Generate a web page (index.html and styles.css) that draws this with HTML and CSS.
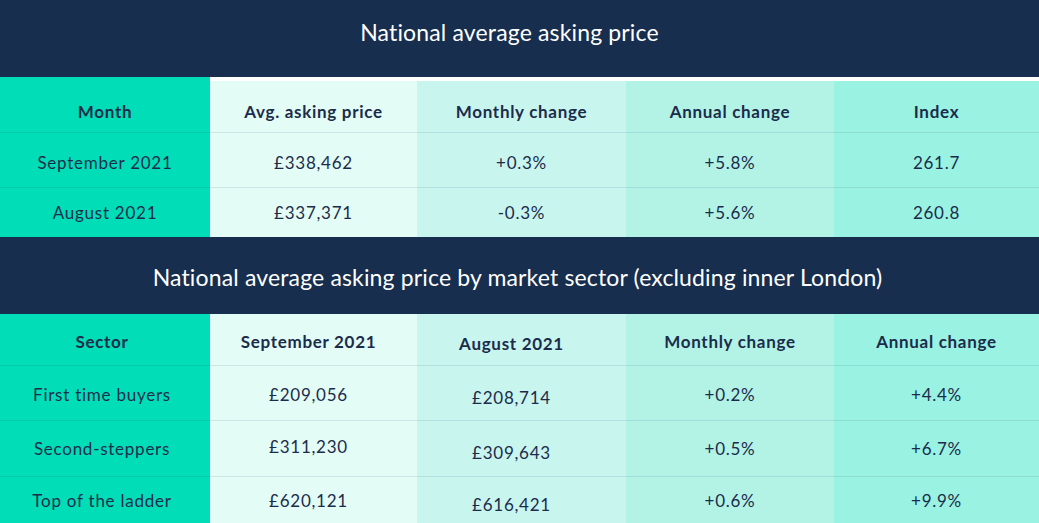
FILE: index.html
```html
<!DOCTYPE html>
<html lang="en">
<head>
<meta charset="utf-8">
<title>National average asking price</title>
<link rel="stylesheet" href="styles.css">
</head>
<body>
<section class="block">
  <h2 class="title title-main">National average asking price</h2>
  <div class="grid t1">
    <div class="cell c1 head">Month</div>
    <div class="cell c2 head">Avg. asking price</div>
    <div class="cell c3 head">Monthly change</div>
    <div class="cell c4 head">Annual change</div>
    <div class="cell c5 head">Index</div>

    <div class="cell c1 r1">September 2021</div>
    <div class="cell c2 r1">£338,462</div>
    <div class="cell c3 r1">+0.3%</div>
    <div class="cell c4 r1">+5.8%</div>
    <div class="cell c5 r1">261.7</div>

    <div class="cell c1 r2 last">August 2021</div>
    <div class="cell c2 r2 last">£337,371</div>
    <div class="cell c3 r2 last">-0.3%</div>
    <div class="cell c4 r2 last">+5.6%</div>
    <div class="cell c5 r2 last">260.8</div>
  </div>
</section>
<section class="block">
  <h2 class="title title-sector">National average asking price by market sector (excluding inner London)</h2>
  <div class="grid t2">
    <div class="cell c1 head">Sector</div>
    <div class="cell c2 head">September 2021</div>
    <div class="cell c3 head low">August 2021</div>
    <div class="cell c4 head">Monthly change</div>
    <div class="cell c5 head">Annual change</div>

    <div class="cell c1 s1">First time buyers</div>
    <div class="cell c2 s1">£209,056</div>
    <div class="cell c3 s1 low">£208,714</div>
    <div class="cell c4 s1">+0.2%</div>
    <div class="cell c5 s1">+4.4%</div>

    <div class="cell c1 s2">Second-steppers</div>
    <div class="cell c2 s2 up">£311,230</div>
    <div class="cell c3 s2 low">£309,643</div>
    <div class="cell c4 s2">+0.5%</div>
    <div class="cell c5 s2">+6.7%</div>

    <div class="cell c1 s3 last">Top of the ladder</div>
    <div class="cell c2 s3 last">£620,121</div>
    <div class="cell c3 s3 last low">£616,421</div>
    <div class="cell c4 s3 last">+0.6%</div>
    <div class="cell c5 s3 last">+9.9%</div>
  </div>
</section>
</body>
</html>
```
FILE: styles.css
```css
* { box-sizing: border-box; }
html, body {
  margin: 0;
  padding: 0;
}
body {
  background: #172e4e;
  font-family: Lato, "Open Sans", Arial, sans-serif;
  color: #1b2c4b;
  width: 1039px;
  height: 523px;
  overflow: hidden;
}
.title {
  margin: 0;
  height: 77px;
  display: flex;
  align-items: center;
  justify-content: center;
  color: #ffffff;
  font-weight: 400;
  font-size: 23px;
  letter-spacing: 0.15px;
}
.title-main {
  padding-bottom: 14px;
  padding-right: 20px;
}
.title-sector {
  padding-top: 2px;
  padding-right: 4px;
}
.grid {
  display: grid;
  grid-template-columns: 210px 207px 209px 208px 205px;
}
.cell {
  display: flex;
  align-items: center;
  justify-content: center;
  font-size: 17px;
  letter-spacing: 0.75px;
  white-space: nowrap;
  border-bottom: 1px solid rgba(30, 80, 90, 0.12);
}
.cell.last { border-bottom: none; }
.c1 { background: #00ddb7; }
.c2 { background: #e4fcf6; }
.c3 { background: #c9f5ef; }
.c4 { background: #b2f3e6; }
.c5 { background: #99f2e2; }

.head { font-weight: 700; letter-spacing: 0.7px; }

.t1 .head { height: 56px; padding-top: 14px; }
.t1 .head.c2, .t1 .head.c3, .t1 .head.c4, .t1 .head.c5 {
  border-top: 4px solid #ffffff;
  padding-top: 10px;
}
.t1 .r1 { height: 55px; padding-top: 4px; }
.t1 .r2 { height: 49px; }

.t2 .c1 { padding-right: 6px; }
.t2 .c2 { padding-right: 10px; }
.t2 .c3 { padding-right: 20px; }
.t2 .head { height: 52px; padding-top: 4px; }
.t2 .s1 { height: 55px; padding-top: 2px; }
.t2 .s2 { height: 56px; }
.t2 .s3 { height: 46px; }
.t2 .low { padding-top: 8px; }
.t2 .up { padding-bottom: 4px; }
```
